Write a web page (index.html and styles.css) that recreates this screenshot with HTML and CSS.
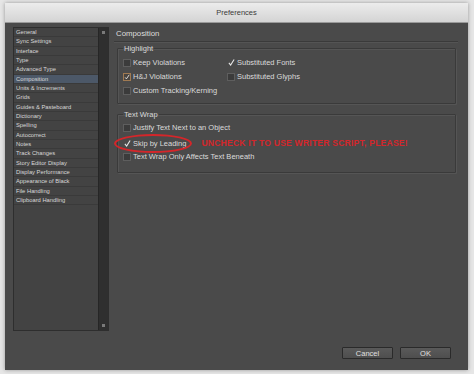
FILE: index.html
```html
<!doctype html>
<html lang="en">
	<head>
		<meta charset="UTF-8" />
		<title>Preferences</title>
		<link rel="stylesheet" href="styles.css">
	</head>
	<body>
		<div class="window">
			<div class="titlebar">Preferences</div>
			<div class="content">
				<div class="sidebar">
					<ul class="nav-list">
						<li>General</li>
						<li>Sync Settings</li>
						<li>Interface</li>
						<li>Type</li>
						<li>Advanced Type</li>
						<li class="selected">Composition</li>
						<li>Units &amp; Increments</li>
						<li>Grids</li>
						<li>Guides &amp; Pasteboard</li>
						<li>Dictionary</li>
						<li>Spelling</li>
						<li>Autocorrect</li>
						<li>Notes</li>
						<li>Track Changes</li>
						<li>Story Editor Display</li>
						<li>Display Performance</li>
						<li>Appearance of Black</li>
						<li>File Handling</li>
						<li>Clipboard Handling</li>
					</ul>
					<div class="scrollbar">
						<span class="arrow up"></span>
						<span class="arrow down"></span>
					</div>
				</div>

				<div class="main">
					<h2 class="panel-title">Composition</h2>

					<fieldset class="group">
						<legend>Highlight</legend>
						<div class="grid">
							<label class="opt"><span class="box"></span>Keep Violations</label>
							<label class="opt"><span class="tick"><svg viewBox="0 0 8 8"><path d="M1 4.5 L3 7 L7 0.5" /></svg></span>Substituted Fonts</label>
							<label class="opt"><span class="box checked"><svg viewBox="0 0 8 8"><path d="M1.5 4.5 L3.2 6.5 L7 1" /></svg></span>H&amp;J Violations</label>
							<label class="opt"><span class="box"></span>Substituted Glyphs</label>
							<label class="opt"><span class="box"></span>Custom Tracking/Kerning</label>
						</div>
					</fieldset>

					<fieldset class="group wrap">
						<legend>Text Wrap</legend>
						<label class="opt"><span class="box"></span>Justify Text Next to an Object</label>
						<div class="opt-row">
							<label class="opt circled"><span class="tick"><svg viewBox="0 0 8 8"><path d="M1 4.5 L3 7 L7 0.5" /></svg></span>Skip by Leading<span class="oval"></span></label>
							<span class="note">UNCHECK IT TO USE WRITER SCRIPT, PLEASE!</span>
						</div>
						<label class="opt"><span class="box"></span>Text Wrap Only Affects Text Beneath</label>
					</fieldset>
				</div>
			</div>
			<div class="footer">
				<button class="btn">Cancel</button>
				<button class="btn">OK</button>
			</div>
		</div>
	</body>
</html>
```

FILE: styles.css
```css
html, body {
	margin: 0;
	padding: 0;
}
body {
	width: 474px;
	height: 374px;
	background-color: #e6e6e6;
	font-family: "Liberation Sans", Arial, sans-serif;
	overflow: hidden;
}
.window {
	margin: 3px 0 0 5px;
	width: 463px;
	height: 367px;
	background-color: #4a4a4a;
	display: flex;
	flex-direction: column;
	box-shadow: 0 0 4px rgba(0, 0, 0, 0.35);
}
.titlebar {
	height: 19px;
	line-height: 19px;
	text-align: center;
	font-size: 7.5px;
	color: #3a3a3a;
	background: linear-gradient(#ececec, #d4d4d4);
	border-bottom: 1px solid #9a9a9a;
}
.content {
	flex: 1;
	display: flex;
	padding: 4px 0 0 8px;
}
.sidebar {
	display: flex;
	height: 302px;
	border: 1px solid #2e2e2e;
}
.nav-list {
	list-style: none;
	margin: 0;
	padding: 0;
	width: 84px;
	background-color: #434343;
}
.nav-list li {
	height: 9.33px;
	line-height: 9px;
	box-sizing: border-box;
	padding-left: 2px;
	font-size: 5.8px;
	color: #d8d8d8;
	border-bottom: 1px solid #3a3a3a;
	white-space: nowrap;
}
.nav-list li.selected {
	background-color: #4c5868;
}
.scrollbar {
	width: 9px;
	background-color: #2f2f2f;
	position: relative;
	border-left: 1px solid #262626;
}
.arrow {
	position: absolute;
	left: 3px;
	width: 3px;
	height: 3px;
	background-color: #7a7a7a;
}
.arrow.up {
	top: 3px;
}
.arrow.down {
	bottom: 3px;
}
.main {
	flex: 1;
	padding: 0 10px 0 5px;
	color: #dedede;
}
.panel-title {
	margin: 2px 0 0 0;
	padding-left: 2px;
	font-size: 7.8px;
	font-weight: normal;
	padding-bottom: 3px;
	border-bottom: 1px solid #3a3a3a;
	box-shadow: 0 1px 0 #545454;
}
.group {
	margin: 2px 2px 0 3px;
	padding: 2px 0 8px 5px;
	border: 1px solid #3a3a3a;
	box-shadow: inset 1px 1px 0 #555, 1px 1px 0 #555;
	border-radius: 1px;
}
.group legend {
	padding: 0 1px;
	font-size: 7.5px;
	color: #d8d8d8;
}
.grid {
	display: grid;
	grid-template-columns: 104px 1fr;
	row-gap: 5px;
	padding-top: 3px;
}
.opt {
	display: flex;
	align-items: center;
	height: 9px;
	font-size: 7.5px;
	color: #dadada;
	white-space: nowrap;
}
.box {
	width: 6px;
	height: 6px;
	margin-right: 2px;
	background-color: #3b3b3b;
	border: 1px solid #5e5e5e;
	display: inline-flex;
}
.box.checked {
	border-color: #a07a52;
	background-color: #4a4540;
}
.box svg, .tick svg {
	width: 100%;
	height: 100%;
	fill: none;
	stroke: #e8e8e8;
	stroke-width: 1.2;
}
.tick {
	width: 7px;
	height: 7px;
	margin: 0 2px 0 1px;
	display: inline-flex;
}
.wrap {
	margin-top: 6px;
	padding-bottom: 11px;
}
.wrap .opt {
	margin-top: 4px;
}
.wrap .opt:first-of-type {
	margin-top: 2px;
}
.opt-row {
	display: flex;
	align-items: center;
	margin-top: 5px;
}
.opt-row .opt {
	margin-top: 0;
}
.circled {
	position: relative;
}
.oval {
	position: absolute;
	left: -9px;
	top: -5px;
	width: 74px;
	height: 15px;
	border: 2px solid #d4262a;
	border-radius: 50%;
}
.note {
	margin-left: 15px;
	font-size: 8.6px;
	font-weight: bold;
	color: #d4262a;
	letter-spacing: 0.2px;
	white-space: nowrap;
}
.footer {
	display: flex;
	justify-content: flex-end;
	gap: 7px;
	padding: 0 17px 11px 0;
}
.btn {
	width: 51px;
	height: 12px;
	padding: 0;
	font-family: "Liberation Sans", Arial, sans-serif;
	font-size: 7.5px;
	color: #e0e0e0;
	background: linear-gradient(#5a5a5a, #4e4e4e);
	border: 1px solid #2a2a2a;
	border-radius: 1px;
}
```
